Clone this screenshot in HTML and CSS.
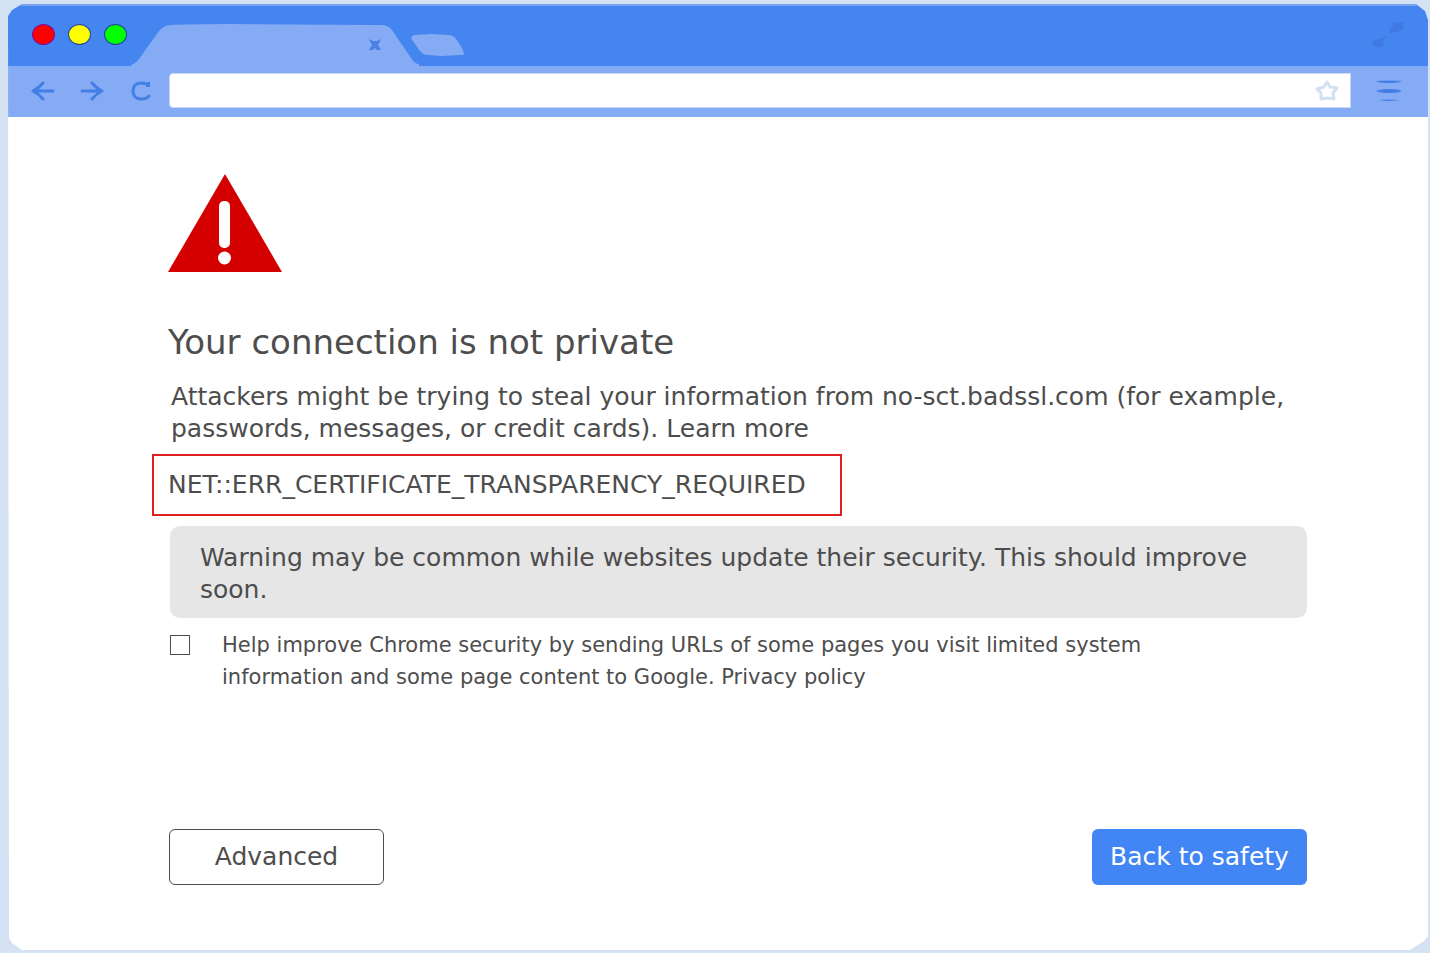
FILE: index.html
```
<!DOCTYPE html>
<html lang="en">
<head>
    <meta charset="UTF-8">
    <meta name="viewport" content="width=device-width, initial-scale=1.0">
    <title>Privacy error</title>
    <link rel="stylesheet" href="styles.css">
</head>
<body>
    <div class="window">
        <div class="tab-bar">
            <div class="window-buttons">
                <button class="dot red" aria-label="Close window"></button>
                <button class="dot yellow" aria-label="Minimize"></button>
                <button class="dot green" aria-label="Maximize"></button>
            </div>
            <div class="tab">
                <svg width="288" height="42" viewBox="0 0 288 42">
                    <path d="M0 41Q4 40 8 35L28 7Q33 1 40 1Q60 0 100 0L240 1H250Q257 1 261 6L280 34Q284 40 288 40V42H0Z" fill="#85abf4"/>
                    <path d="M238 15L242 17H246L250 15L247 21L250 26H246L244 24L242 26H238L241 21Z" fill="#4a80e4"/>
                </svg>
            </div>
            <button class="new-tab" aria-label="New tab">
                <svg width="54" height="22" viewBox="0 0 54 22">
                    <path d="M1 6Q-1 1 5 1L20 0L37 1Q42 1 45 5Q50 11 53 19Q54 21 50 21L30 22L17 21Q12 21 9 17Z" fill="#85abf4"/>
                </svg>
            </button>
            <button class="expand" aria-label="Full screen">
                <svg width="34" height="28" viewBox="0 0 34 28">
                    <path d="M17 8L21 5L20 1L31 0L31 7L26 10L17 11ZM1 18L7 17L15 14L11 19L12 24L7 25L1 24Z" fill="#4079e2"/>
                </svg>
            </button>
        </div>
        <div class="toolbar">
            <div class="nav-buttons">
                <button aria-label="Back">
                    <svg width="24" height="20" viewBox="0 0 24 20">
                        <path d="M12 2Q8 7 2 10Q8 13 12 18M3 10H22" fill="none" stroke="#437ee5" stroke-width="3" stroke-linecap="round" stroke-linejoin="round"/>
                    </svg>
                </button>
                <button aria-label="Forward">
                    <svg width="24" height="20" viewBox="0 0 24 20">
                        <path d="M12 2Q16 7 22 10Q16 13 12 18M21 10H2" fill="none" stroke="#437ee5" stroke-width="3" stroke-linecap="round" stroke-linejoin="round"/>
                    </svg>
                </button>
                <button aria-label="Reload">
                    <svg width="24" height="20" viewBox="0 0 24 20">
                        <path d="M19 4Q16 2 12 2C7 2 4 5 4 10S7 18 12 18Q18 18 20 15" fill="none" stroke="#437ee5" stroke-width="3" stroke-linecap="round"/>
                        <path d="M18 1L21 1V6L17 6Z" fill="#437ee5"/>
                    </svg>
                </button>
            </div>
            <div class="address">
                <input type="text" aria-label="Address">
                <button class="star" aria-label="Bookmark">
                    <svg width="24" height="22" viewBox="0 0 24 22">
                        <path d="M12 2L15 7L22 8L18 13L19 19L12 18L6 19L6 13L2 9L9 7Z" fill="none" stroke="#d2e0f3" stroke-width="3" stroke-linejoin="round"/>
                    </svg>
                </button>
            </div>
            <button class="menu" aria-label="Menu">
                <svg width="26" height="22" viewBox="0 0 26 22">
                    <path d="M0 1Q13 0 26 1Q23 3 13 3Q3 3 0 1ZM0 11Q4 9 13 9Q22 9 26 11Q22 13 13 13Q4 13 0 11ZM3 20Q13 19 23 20Q13 22 3 20Z" fill="#437ee5"/>
                </svg>
            </button>
        </div>
        <main class="content">
            <svg class="warning-icon" width="114" height="98" viewBox="0 0 114 98">
                <path d="M57 0L114 98H0Z" fill="#d40000"/>
                <rect x="51" y="27" width="11" height="47" rx="5" fill="#fff"/>
                <circle cx="56.500" cy="84" r="6.500" fill="#fff"/>
            </svg>
            <h1>Your connection is not private</h1>
            <p class="description">Attackers might be trying to steal your information from no-sct.badssl.com (for example, passwords, messages, or credit cards). <a href="#">Learn more</a></p>
            <div class="error-code">NET::ERR_CERTIFICATE_TRANSPARENCY_REQUIRED</div>
            <p class="notice">Warning may be common while websites update their security. This should improve soon.</p>
            <div class="opt-in">
                <input type="checkbox" id="optIn">
                <label for="optIn">Help improve Chrome security by sending URLs of some pages you visit limited system information and some page content to Google. <a href="#">Privacy policy</a></label>
            </div>
            <div class="actions">
                <button class="advanced">Advanced</button>
                <button class="safety">Back to safety</button>
            </div>
        </main>
    </div>
</body>
</html>
```
FILE: styles.css
```
:root {
    --text-color: #4d4d4d;
    --frame-color: #d5e2f3;
    --bar-color: #4485ef;
    --toolbar-color: #85abf4;
    --button-color: #4285f4;
    --error-color: #e02020;
}

* {
    box-sizing: border-box;
}

body {
    margin: 0;
    padding: 4px 2px 3px 8px;
    min-height: 100vh;
    display: flex;
    background-color: var(--frame-color);
    color: var(--text-color);
    font-family: "DejaVu Sans", sans-serif;
    font-size: 25px;
    line-height: 32px;
}

a {
    color: inherit;
    text-decoration: none;
}

button {
    padding: 0;
    border: none;
    background: none;
    font: inherit;
    color: inherit;
    cursor: pointer;
}

svg {
    display: block;
}

.window {
    flex: 1;
    display: flex;
    flex-direction: column;
    background-color: #fff;
    clip-path: polygon(14px 0, calc(100% - 12px) 0, calc(100% - 3px) 7px, 100% 16px, 100% calc(100% - 14px), calc(100% - 4px) calc(100% - 9px), calc(100% - 18px) 100%, 14px 100%, 4px calc(100% - 7px), 1px calc(100% - 12px), 0 12px, 4px 6px);
}

/* Tab bar */
.tab-bar {
    display: flex;
    align-items: flex-end;
    height: 62px;
    padding-left: 24px;
    background-color: var(--bar-color);
    border-top: 2px solid #78a4f1;
}

.window-buttons {
    display: flex;
    gap: 13px;
    width: 99px;
    padding-bottom: 21px;
}

.dot {
    flex: none;
    width: 23px;
    height: 21px;
    border: 1px solid #24479c;
    border-radius: 50%;
}

.red {
    background-color: #f00;
    border-color: #80109a;
}

.yellow {
    background-color: #ff0;
}

.green {
    background-color: #0f0;
}

.new-tab {
    margin-left: -8px;
    padding-bottom: 10px;
}

.expand {
    margin: 0 22px 16px auto;
}

/* Toolbar */
.toolbar {
    display: flex;
    align-items: center;
    height: 51px;
    padding: 0 26px 2px 23px;
    background-color: var(--toolbar-color);
}

.nav-buttons {
    display: flex;
    gap: 25px;
    width: 138px;
}

.address {
    position: relative;
    flex: 1;
}

.address input {
    display: block;
    width: 100%;
    height: 35px;
    padding: 0 44px 0 12px;
    border: 1px solid #c8d9f9;
    border-radius: 4px 0 0 4px;
    background-color: #fff;
    font: inherit;
    font-size: 21px;
}

.star {
    position: absolute;
    top: 7px;
    right: 12px;
}

.menu {
    margin-left: 25px;
}

/* Page */
.content {
    flex: 1;
    display: flex;
    flex-direction: column;
    align-items: flex-start;
    padding: 57px 121px 65px 160px;
}

h1 {
    margin: 50px 0 19px;
    font-size: 34px;
    font-weight: normal;
    line-height: 40px;
}

.description {
    margin: 0;
    padding-left: 3px;
}

.error-code {
    margin: 9px 0 10px -16px;
    padding: 13px 34px 13px 14px;
    border: 2px solid var(--error-color);
}

.notice {
    align-self: stretch;
    margin: 0 0 11px 2px;
    padding: 16px 30px 12px;
    background-color: #e6e6e6;
    border-radius: 10px;
}

.opt-in {
    display: flex;
    align-items: flex-start;
    gap: 32px;
    max-width: 1000px;
    padding-left: 2px;
    font-size: 21px;
}

.opt-in input {
    appearance: none;
    flex: none;
    width: 20px;
    height: 20px;
    margin: 6px 0 0;
    border: 1px solid var(--text-color);
    background-color: #fff;
}

.opt-in input:checked {
    background-color: var(--button-color);
}

.actions {
    align-self: stretch;
    display: flex;
    justify-content: space-between;
    margin-top: auto;
    padding-left: 1px;
}

.actions button {
    width: 215px;
    height: 56px;
    border-radius: 6px;
}

.advanced {
    border: 1px solid var(--text-color);
}

.safety {
    background-color: var(--button-color);
    color: #fff;
}
```
